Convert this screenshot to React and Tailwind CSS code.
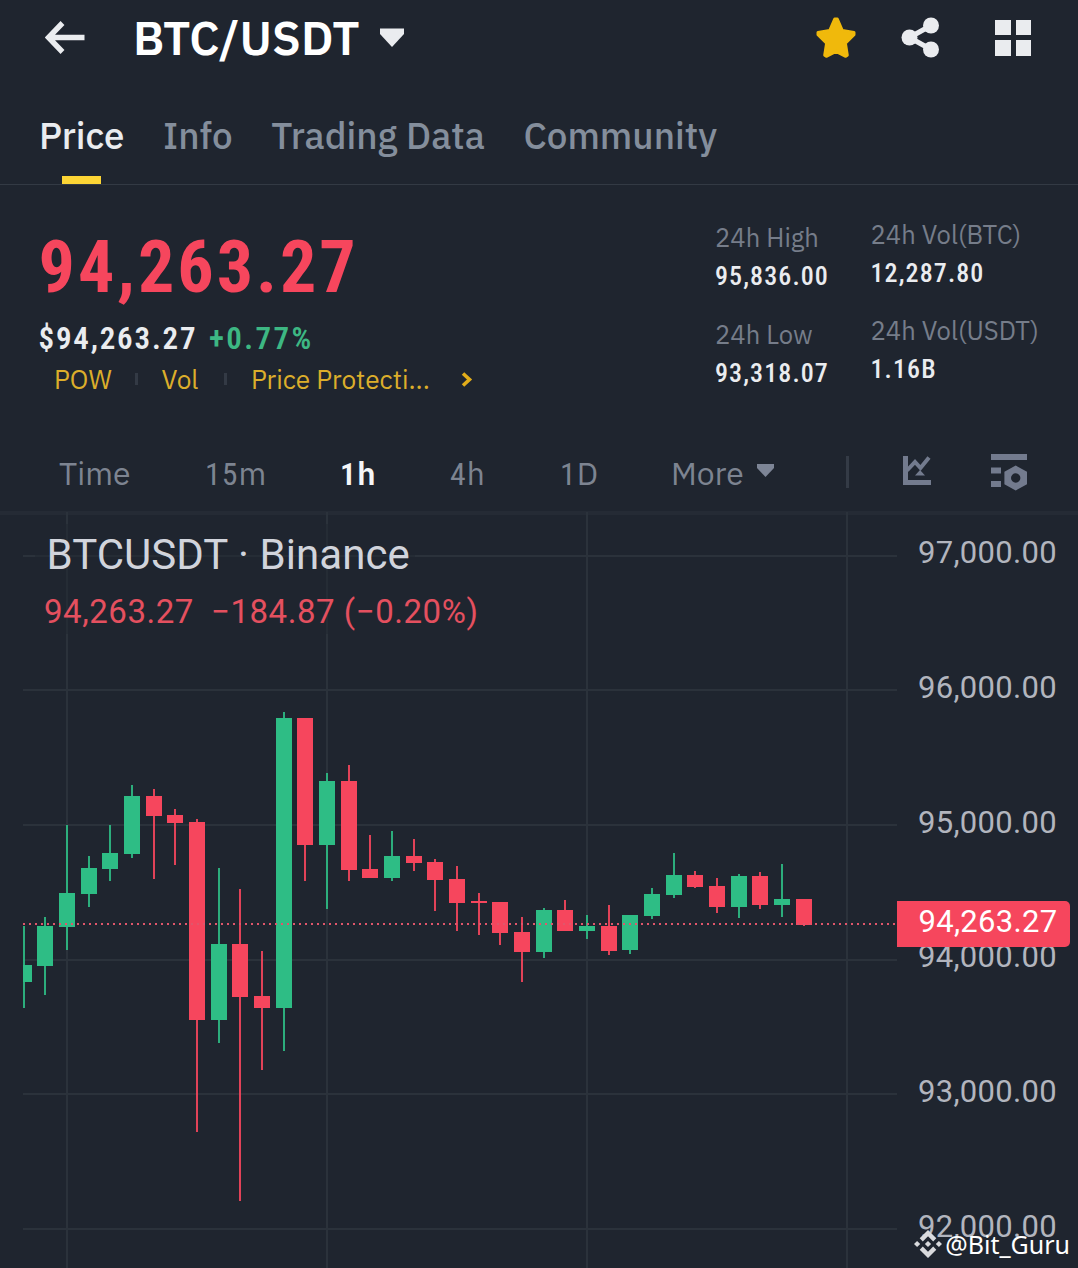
/**
 * Market detail screen: pair header, 24h stats, interval picker and candle chart.
 */

const UP = '#2ebd85';
const DOWN = '#f6465d';

const TABS = ['Info', 'Trading Data', 'Community'];

// [x, wickTop, wickBottom, bodyTop, bodyBottom, isUp]
const CANDLES = [
  [45, 917, 995, 926, 966, 1],
  [67, 825, 950, 893, 927, 1],
  [89, 856, 907, 868, 894, 1],
  [110, 825, 881, 853, 869, 1],
  [132, 785, 858, 796, 854, 1],
  [154, 789, 879, 796, 816, 0],
  [175, 809, 865, 815, 823, 0],
  [197, 819, 1132, 822, 1020, 0],
  [219, 868, 1043, 944, 1020, 1],
  [240, 889, 1201, 944, 997, 0],
  [262, 951, 1070, 996, 1008, 0],
  [284, 712, 1051, 718, 1008, 1],
  [305, 718, 881, 718, 845, 0],
  [327, 773, 909, 781, 845, 1],
  [349, 765, 881, 781, 870, 0],
  [370, 835, 878, 869, 878, 0],
  [392, 831, 881, 856, 878, 1],
  [414, 839, 871, 856, 863, 0],
  [435, 859, 911, 862, 880, 0],
  [457, 866, 931, 879, 903, 0],
  [479, 893, 935, 901, 903, 0],
  [500, 902, 945, 902, 933, 0],
  [522, 917, 982, 932, 952, 0],
  [544, 908, 958, 910, 952, 1],
  [565, 900, 931, 910, 931, 0],
  [587, 915, 939, 926, 931, 1],
  [609, 905, 955, 926, 951, 0],
  [630, 915, 954, 915, 950, 1],
  [652, 888, 919, 894, 916, 1],
  [674, 853, 898, 875, 895, 1],
  [695, 871, 888, 875, 887, 0],
  [717, 878, 913, 886, 907, 0],
  [739, 874, 918, 876, 907, 1],
  [760, 872, 909, 876, 905, 0],
  [782, 864, 917, 899, 905, 1],
  [804, 899, 926, 899, 925, 0],
];

// [gridline y, label baseline, label]
const PRICE_LINES = [
  [556, 563, '97,000.00'],
  [690, 698, '96,000.00'],
  [825, 833, '95,000.00'],
  [960, 967, '94,000.00'],
  [1094, 1102, '93,000.00'],
  [1229, 1237, '92,000.00'],
];

const TIME_LINES = [67, 327, 587, 847];

function Header() {
  return (
    <header className="flex h-[75px] items-center pl-[45px]">
      <svg width="41" height="34" viewBox="0 0 41 34" fill="none" stroke="#eaecef" strokeWidth="5.4">
        <path d="M39.500 16.500H4M17.500 2 3.500 16.500l14 14.500" />
      </svg>
      <h1 className="ml-[47px] w-[227px] text-[47.2px] leading-none font-semibold text-white">BTC/USDT</h1>
      <svg className="ml-[19.5px]" width="24" height="20" viewBox="0 0 24 20" fill="#eaecef">
        <path d="M0 .5h24v5.500L12 19 0 6z" />
      </svg>
      <div className="mr-[47px] ml-auto flex items-center gap-[45px]">
        <svg width="40" height="42" viewBox="0 0 40 42" fill="#f0b90b" stroke="#f0b90b" strokeWidth="3" strokeLinejoin="round">
          <path d="M18.700 2h2.600l5 11.500 11.700 2v2.200l-8.600 8.600 1.900 12-1.600 1-9.700-5-9.700 5-1.600-1 1.900-12L2 17.700v-2.200l11.700-2z" />
        </svg>
        <svg width="39" height="42" viewBox="0 0 39 42" fill="#eaecef">
          <path d="M8.500 20.500 30 8.500M8.500 20.500 30 32.500" stroke="#eaecef" strokeWidth="5" />
          <circle cx="8.500" cy="20.500" r="8" />
          <circle cx="30" cy="8.500" r="8" />
          <circle cx="30" cy="32.500" r="8" />
        </svg>
        <div className="ml-[10px] grid grid-cols-2 gap-[5px]">
          <span className="size-[15.5px] bg-[#eaecef]" />
          <span className="size-[15.5px] bg-[#eaecef]" />
          <span className="size-[15.5px] bg-[#eaecef]" />
          <span className="size-[15.5px] bg-[#eaecef]" />
        </div>
      </div>
    </header>
  );
}

function Tabs() {
  return (
    <nav className="flex h-[110px] items-stretch gap-[38.5px] border-b border-[#333a44] pl-[39px] text-[36.8px] font-medium text-[#848e9c]">
      <div className="relative flex items-center pt-[13px] text-[#eaecef]">
        Price
        <span className="absolute bottom-0 left-[23px] h-2 w-[39px] bg-[#fcd535]" />
      </div>
      {TABS.map((tab) => (
        <div key={tab} className="flex items-center pt-[13px]">{tab}</div>
      ))}
    </nav>
  );
}

function Stat({ label, value }) {
  return (
    <div>
      <div className="text-[25.6px] leading-9 text-[#767d8a]">{label}</div>
      <div className="font-['Roboto_Condensed','Roboto',sans-serif] text-[26px] leading-10 font-medium tracking-[1.1px] text-[#eaecef]">
        {value}
      </div>
    </div>
  );
}

function Summary() {
  return (
    <section className="flex h-[251px]">
      <div className="w-[715px] pt-[41px]">
        <div className="pl-[38.5px] font-['Roboto_Condensed','Roboto',sans-serif] text-[72px] leading-[84px] font-bold tracking-[3px] text-[#f6465d]">
          94,263.27
        </div>
        <div className="mt-[11px] flex pl-[38.5px] font-['Roboto_Condensed','Roboto',sans-serif] text-[31px] leading-9 font-semibold tracking-[1.8px]">
          <span className="w-[170.5px] text-[#eaecef]">$94,263.27</span>
          <span className="tracking-[2.4px] text-[#3db783]">+0.77%</span>
        </div>
        <div className="mt-[7px] flex items-center pl-[54px] text-[26.2px] leading-[30px] text-[#dcae2b]">
          <span className="w-[80.5px]">POW</span>
          <span className="h-3 w-[3px] bg-[#333a45]" />
          <span className="ml-[24px] w-[62.5px]">Vol</span>
          <span className="h-3 w-[3px] bg-[#333a45]" />
          <span className="ml-[24px] w-[209.5px]">Price Protecti...</span>
          <svg width="12" height="15" viewBox="0 0 12 15" fill="none" stroke="#e2ad1a" strokeWidth="3.6">
            <path d="M2 1.500 8.500 7.500 2 13.500" />
          </svg>
        </div>
      </div>
      <div className="flex w-[155.5px] flex-col gap-[21px] pt-[35px]">
        <Stat label="24h High" value="95,836.00" />
        <Stat label="24h Low" value="93,318.07" />
      </div>
      <div className="flex flex-col gap-5 pt-8">
        <Stat label="24h Vol(BTC)" value="12,287.80" />
        <Stat label="24h Vol(USDT)" value="1.16B" />
      </div>
    </section>
  );
}

function Interval({ count, unit, className }) {
  return (
    <div className={className}>
      <span className="font-['Roboto_Condensed','Roboto',sans-serif] tracking-[1px]">{count}</span>
      {unit}
    </div>
  );
}

function Intervals() {
  return (
    <nav className="flex h-[75px] items-center pb-[3px] pl-[59px] text-[31.8px] text-[#7d8491]">
      <div className="flex pt-1">
        <div className="w-[146px]">Time</div>
        <Interval className="w-[135px]" count="15" unit="m" />
        <Interval className="w-[110px] font-semibold text-[#f5f6f8]" count="1" unit="h" />
        <Interval className="w-[110px]" count="4" unit="h" />
        <Interval className="w-[111px]" count="1" unit="D" />
        <div className="w-[86px]">More</div>
      </div>
      <svg className="-mt-1" width="17" height="13" viewBox="0 0 17 13" fill="#7d8596">
        <path d="M0 0h17v4L8.500 13 0 4z" />
      </svg>
      <span className="ml-[72px] h-8 w-[3px] bg-[#343b46]" />
      <svg className="-mt-1 ml-[54px]" width="29" height="30" viewBox="0 0 29 30" fill="none" stroke="#737b8e">
        <path d="M2.500 1v26.500H28" strokeWidth="5" />
        <path d="M4 15.500 12 7l5.500 6L26 2.500" strokeWidth="4" />
        <path d="M12 20.500 17 15l5 5.500z" fill="#737b8e" stroke="none" />
      </svg>
      <svg className="ml-[59px]" width="36" height="38" viewBox="0 0 36 38" fill="#737b8e">
        <path d="M0 1h36v6H0zM0 14.500h10v6H0zM0 28h10v6H0z" />
        <path fillRule="evenodd" d="M24.700 12.500 36 18.800v12.400L24.700 37.500 13.400 31.200V18.800zM24.700 20.300a4.700 4.700 0 1 0 0 9.400 4.700 4.700 0 0 0 0-9.400z" />
      </svg>
    </nav>
  );
}

function Candle({ candle }) {
  const [x, high, low, top, bottom, isUp] = candle;
  const color = isUp ? UP : DOWN;
  return (
    <g fill={color}>
      <rect x={x - 1} y={high} width="2" height={low - high} opacity="0.9" />
      <rect x={x - 8} y={top} width="16" height={bottom - top} />
    </g>
  );
}

function Chart() {
  return (
    <section className="relative h-[757px] font-['Roboto',sans-serif]">
      <svg className="block" width="1078" height="757" viewBox="0 511 1078 757">
        <rect x="0" y="511" width="1078" height="4" fill="#252b35" />
        <g fill="#2b323b">
          {TIME_LINES.map((x) => <rect key={x} x={x - 1} y="512" width="2" height="756" />)}
          {PRICE_LINES.map(([y]) => <rect key={y} x="23" y={y - 1} width="874" height="2" />)}
        </g>

        {/* legend dims the grid behind it */}
        <rect x="35" y="524" width="380" height="62" fill="#1f252f" opacity="0.5" />
        <rect x="35" y="586" width="450" height="48" fill="#1f252f" opacity="0.5" />

        {/* first candle is cut off by the left edge of the plot */}
        <rect x="23" y="926" width="2" height="82" fill={UP} opacity="0.9" />
        <rect x="23" y="965" width="9" height="17" fill={UP} />
        {CANDLES.map((candle) => <Candle key={candle[0]} candle={candle} />)}

        <line x1="23" x2="897" y1="924" y2="924" stroke="#e0566b" strokeWidth="2" strokeDasharray="2 4" />

        <g fill="#b2b5be" fontSize="31" letterSpacing="0.3">
          {PRICE_LINES.map(([, y, label]) => <text key={y} x="918" y={y}>{label}</text>)}
        </g>
        <path d="M897 901h168a5 5 0 0 1 5 5v36a5 5 0 0 1-5 5H897z" fill={DOWN} />
        <text x="918.5" y="932" fill="#fff" fontSize="31" letterSpacing="0.3">94,263.27</text>
      </svg>

      {/* legend */}
      <div className="absolute top-[19px] left-[46.5px] text-[42px] leading-[50px] tracking-[0.04px] whitespace-nowrap text-[#d1d4dc]">
        BTCUSDT · Binance
      </div>
      <div className="absolute top-[81px] left-[44px] flex gap-[17px] text-[33px] leading-10 tracking-[0.55px] whitespace-nowrap text-[#e4505f]">
        <span>94,263.27</span>
        <span>−184.87 (−0.20%)</span>
      </div>

      {/* author tag */}
      <div className="absolute right-[8px] bottom-[8px] flex items-center gap-[3px] text-white">
        <svg width="28" height="28" viewBox="0 0 28 28" fill="#d9dadd">
          <path d="M14 0l8.300 8.300-3.100 3.100L14 6.200l-5.200 5.200-3.100-3.100zM14 28l-8.300-8.300 3.100-3.100 5.200 5.200 5.200-5.200 3.100 3.100zM0 14l3.100-3.100L6.200 14l-3.100 3.100zM21.800 14l3.100-3.100L28 14l-3.100 3.100zM10.900 14l3.100-3.100 3.100 3.100-3.100 3.100z" />
        </svg>
        <span className="font-['Noto_Sans',sans-serif] text-[25px] leading-8">@Bit_Guru</span>
      </div>
    </section>
  );
}

export default function App() {
  return (
    <main className="h-[1268px] w-[1078px] overflow-hidden bg-[#1f252f] font-['IBM_Plex_Sans','Roboto',sans-serif] whitespace-nowrap">
      <Header />
      <Tabs />
      <Summary />
      <Intervals />
      <Chart />
    </main>
  );
}
